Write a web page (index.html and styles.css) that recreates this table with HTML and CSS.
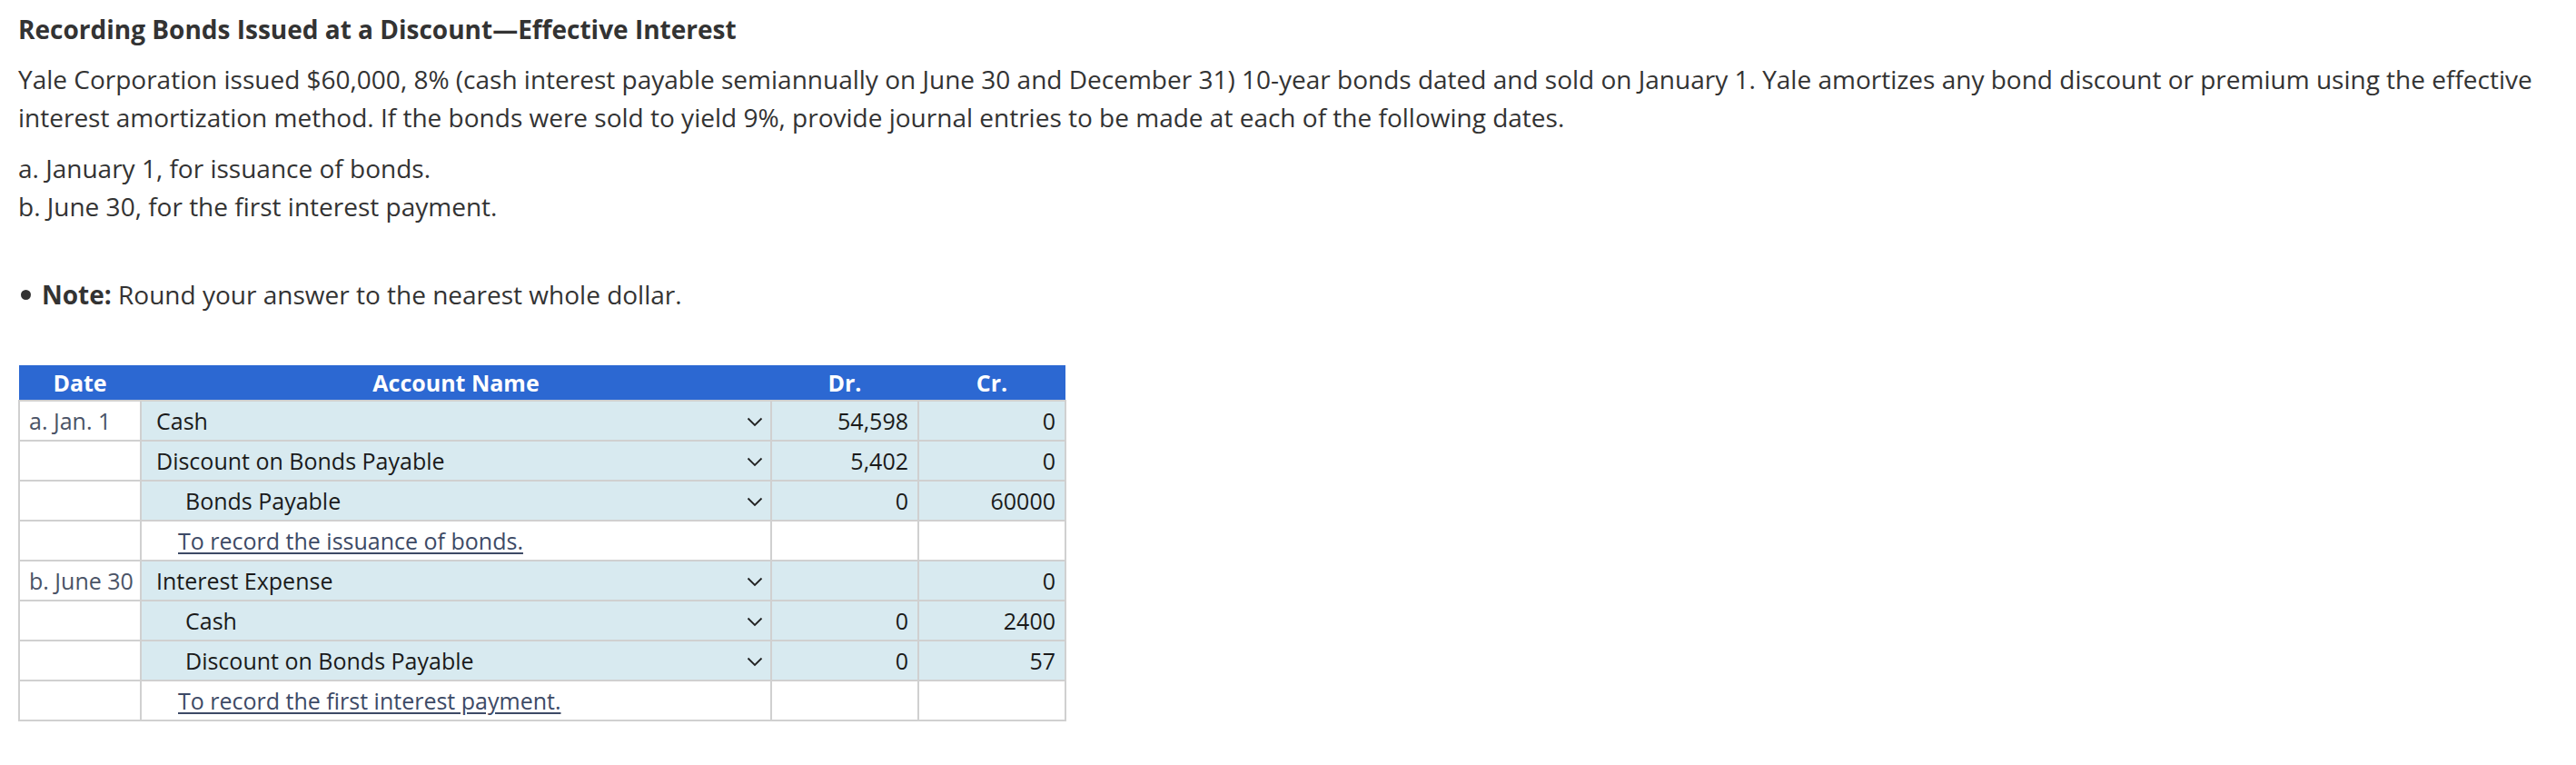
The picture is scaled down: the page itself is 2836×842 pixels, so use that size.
FILE: index.html
```html
<!DOCTYPE html>
<html lang="en">
<head>
<meta charset="utf-8">
<title>Recording Bonds Issued at a Discount</title>
<link rel="stylesheet" href="styles.css">
</head>
<body>
<div class="page">
  <h1 class="title">Recording Bonds Issued at a Discount—Effective Interest</h1>
  <p class="intro">Yale Corporation issued $60,000, 8% (cash interest payable semiannually on June 30 and December 31) 10-year bonds dated and sold on January 1. Yale amortizes any bond discount or premium using the effective interest amortization method. If the bonds were sold to yield 9%, provide journal entries to be made at each of the following dates.</p>
  <div class="parts">
    <div>a. January 1, for issuance of bonds.</div>
    <div>b. June 30, for the first interest payment.</div>
  </div>
  <div class="note"><span class="dot"></span><span><b>Note:</b> Round your answer to the nearest whole dollar.</span></div>

  <table class="journal">
    <colgroup>
      <col class="c-date"><col class="c-acct"><col class="c-num"><col class="c-num">
    </colgroup>
    <thead>
      <tr><th>Date</th><th>Account Name</th><th>Dr.</th><th>Cr.</th></tr>
    </thead>
    <tbody>
      <tr>
        <td class="date">a. Jan. 1</td>
        <td class="acct"><div class="sel"><span>Cash</span><svg class="chev" width="18" height="11" viewBox="0 0 18 11"><polyline points="1.5,1.5 9,9 16.5,1.5" fill="none" stroke="#222" stroke-width="1.8"/></svg></div></td>
        <td class="num">54,598</td>
        <td class="num">0</td>
      </tr>
      <tr>
        <td class="date"></td>
        <td class="acct"><div class="sel"><span>Discount on Bonds Payable</span><svg class="chev" width="18" height="11" viewBox="0 0 18 11"><polyline points="1.5,1.5 9,9 16.5,1.5" fill="none" stroke="#222" stroke-width="1.8"/></svg></div></td>
        <td class="num">5,402</td>
        <td class="num">0</td>
      </tr>
      <tr>
        <td class="date"></td>
        <td class="acct"><div class="sel indent"><span>Bonds Payable</span><svg class="chev" width="18" height="11" viewBox="0 0 18 11"><polyline points="1.5,1.5 9,9 16.5,1.5" fill="none" stroke="#222" stroke-width="1.8"/></svg></div></td>
        <td class="num">0</td>
        <td class="num">60000</td>
      </tr>
      <tr class="memo-row">
        <td class="date"></td>
        <td class="memo"><a>To record the issuance of bonds.</a></td>
        <td class="blank"></td>
        <td class="blank"></td>
      </tr>
      <tr>
        <td class="date">b. June 30</td>
        <td class="acct"><div class="sel"><span>Interest Expense</span><svg class="chev" width="18" height="11" viewBox="0 0 18 11"><polyline points="1.5,1.5 9,9 16.5,1.5" fill="none" stroke="#222" stroke-width="1.8"/></svg></div></td>
        <td class="num"></td>
        <td class="num">0</td>
      </tr>
      <tr>
        <td class="date"></td>
        <td class="acct"><div class="sel indent"><span>Cash</span><svg class="chev" width="18" height="11" viewBox="0 0 18 11"><polyline points="1.5,1.5 9,9 16.5,1.5" fill="none" stroke="#222" stroke-width="1.8"/></svg></div></td>
        <td class="num">0</td>
        <td class="num">2400</td>
      </tr>
      <tr>
        <td class="date"></td>
        <td class="acct"><div class="sel indent"><span>Discount on Bonds Payable</span><svg class="chev" width="18" height="11" viewBox="0 0 18 11"><polyline points="1.5,1.5 9,9 16.5,1.5" fill="none" stroke="#222" stroke-width="1.8"/></svg></div></td>
        <td class="num">0</td>
        <td class="num">57</td>
      </tr>
      <tr class="memo-row">
        <td class="date"></td>
        <td class="memo"><a>To record the first interest payment.</a></td>
        <td class="blank"></td>
        <td class="blank"></td>
      </tr>
    </tbody>
  </table>
</div>
</body>
</html>
```

FILE: styles.css
```css
body {
  margin: 0;
  font-family: "Open Sans", "Liberation Sans", sans-serif;
  color: #333;
  background: #fff;
}

.page {
  padding: 11px 20px 0;
}

.title {
  margin: 0;
  font-size: 28px;
  line-height: 42px;
  font-weight: 700;
  color: #333;
}

.intro {
  margin: 13px 0 0;
  font-size: 28px;
  line-height: 42px;
}

.parts {
  margin-top: 14px;
  font-size: 28px;
  line-height: 42px;
}

.note {
  margin-top: 55px;
  font-size: 28px;
  line-height: 42px;
  display: flex;
  align-items: center;
  gap: 12px;
}

.note b {
  font-weight: 700;
}

.dot {
  width: 11px;
  height: 11px;
  border-radius: 50%;
  background: #333;
  margin-left: 3px;
}

.journal {
  margin-top: 57px;
  width: 1152px;
  table-layout: fixed;
  border-collapse: collapse;
  font-size: 25px;
  color: #1a1a1a;
}

.c-date { width: 134px; }
.c-acct { width: 694px; }
.c-num { width: 162px; }

.journal th {
  background: #2c68d2;
  color: #fff;
  font-weight: 700;
  height: 38px;
  padding: 0;
  line-height: 38px;
  text-align: center;
}

.journal td {
  height: 42px;
  padding: 0;
  border: 2px solid #d0d0d0;
  line-height: 30px;
  vertical-align: middle;
  background: #d8eaf0;
}

.journal td.date {
  background: #fff;
  color: #4a5366;
  padding-left: 10px;
  white-space: nowrap;
}

.journal td.num {
  text-align: right;
  padding-right: 10px;
}

.journal td.blank,
.journal td.memo {
  background: #fff;
}

.sel {
  display: flex;
  align-items: center;
  justify-content: space-between;
  padding: 0 8px 0 16px;
}

.sel.indent {
  padding-left: 48px;
}

.chev {
  display: block;
  margin-top: 2px;
}

.memo {
  padding-left: 40px !important;
}

.memo a {
  color: #3d4a66;
  text-decoration: underline;
  text-underline-offset: 3px;
}
```
